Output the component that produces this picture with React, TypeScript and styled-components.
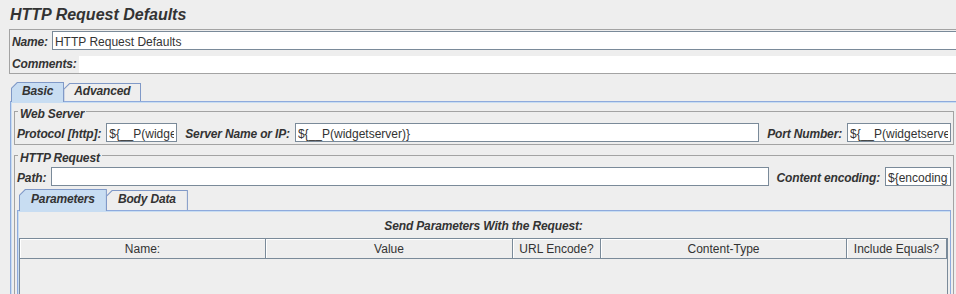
import React from "react";
import styled, { createGlobalStyle } from "styled-components";

const FONT = `"Liberation Sans", Arial, sans-serif`;
const TEXT = "#333333";
const FIELD_BORDER = "#7a8a99";
const GROUP_BORDER = "#a3a3a3";
const TAB_BORDER = "#8099c7";
const PANEL_BORDER = "#8eaadc";
const SELECTED = "#c8ddf2";
const BG = "#eeeeee";

const GlobalStyle = createGlobalStyle`
  html, body { margin: 0; padding: 0; background: ${BG}; overflow: hidden; }
  body { font-family: ${FONT}; font-size: 12px; color: ${TEXT}; }
  *, *::before, *::after { box-sizing: border-box; }
`;

const Page = styled.div`
  width: 956px;
  height: 294px;
  overflow: hidden;
  background: ${BG};
`;

const Title = styled.h1`
  margin: 0;
  height: 29px;
  padding-left: 10px;
  line-height: 29px;
  font-size: 16px;
  font-weight: bold;
  font-style: italic;
  color: ${TEXT};
  white-space: nowrap;
`;

const NamePanel = styled.div`
  margin: 0 -30px 0 9px;
  border: 1px solid ${GROUP_BORDER};
  padding: 1px 0 0 2px;
  display: flex;
  flex-direction: column;
  gap: 6px;
`;

const Row = styled.div<{ $gap?: number; $stretch?: boolean }>`
  display: flex;
  align-items: ${(p) => (p.$stretch ? "stretch" : "baseline")};
  gap: ${(p) => p.$gap ?? 5}px;
`;

const Label = styled.label<{ $after?: boolean; $lh?: number }>`
  flex: none;
  margin-left: ${(p) => (p.$after ? 3 : 0)}px;
  font-weight: bold;
  font-style: italic;
  white-space: nowrap;
  color: ${TEXT};
  letter-spacing: -0.15px;
  ${(p) => (p.$lh ? `line-height: ${p.$lh}px;` : "")}
`;

const Field = styled.input.attrs({ readOnly: true, type: "text" })<{ $w?: number }>`
  flex: ${(p) => (p.$w ? `0 0 ${p.$w}px` : "1 1 0")};
  min-width: 0;
  width: ${(p) => (p.$w ? `${p.$w}px` : "auto")};
  height: 19px;
  margin: 0;
  border: 1px solid ${FIELD_BORDER};
  border-radius: 0;
  padding: 2px 2px 0 2px;
  background: #ffffff;
  font: 12px ${FONT};
  color: ${TEXT};
  outline: none;
`;

const CommentArea = styled.div`
  flex: 1 1 0;
  height: 17px;
  background: #ffffff;
`;

const TabStrip = styled.div<{ $h: number; $inset: number; $top: number }>`
  display: flex;
  align-items: flex-end;
  height: ${(p) => p.$h - 1}px;
  margin-top: ${(p) => p.$top}px;
  padding-left: ${(p) => p.$inset}px;
`;

const Tab = styled.div<{ $active?: boolean; $h: number }>`
  position: relative;
  z-index: ${(p) => (p.$active ? 2 : 1)};
  height: ${(p) => (p.$active ? p.$h : p.$h - 2)}px;
  margin-bottom: ${(p) => (p.$active ? -1 : 0)}px;
  margin-left: -1px;
  padding: 1px 1px 0 1px;
  background: ${TAB_BORDER};
  clip-path: polygon(6px 0, 100% 0, 100% 100%, 0 100%, 0 6px);
  &:first-child { margin-left: 0; }
`;

const TabFace = styled.div<{ $active?: boolean; $pt: number; $px: number }>`
  height: 100%;
  padding: ${(p) => p.$pt}px ${(p) => p.$px}px 0 ${(p) => p.$px}px;
  background: ${(p) => (p.$active ? SELECTED : BG)};
  clip-path: polygon(5.6px 0, 100% 0, 100% 100%, 0 100%, 0 5.6px);
  line-height: 14px;
  font-weight: bold;
  font-style: italic;
  white-space: nowrap;
  color: ${TEXT};
  letter-spacing: -0.15px;
`;

const TabBody = styled.div<{ $pad: string }>`
  border: 1px solid ${PANEL_BORDER};
  box-shadow: inset 1px 1px 0 ${SELECTED};
  padding: ${(p) => p.$pad};
`;

const OuterTabs = styled.div`
  margin-left: 10px;
  width: 948px;
`;

const Group = styled.fieldset<{ $top: number }>`
  margin: ${(p) => p.$top}px 0 0 0;
  min-width: 0;
  border: 1px solid ${GROUP_BORDER};
  padding: 3px 2px 2px 2px;
`;

const GroupTitle = styled.legend`
  margin-left: 1px;
  padding: 5px 2px 0 2px;
  line-height: 12px;
  font-weight: bold;
  font-style: italic;
  color: ${TEXT};
  letter-spacing: -0.15px;
`;

const Caption = styled.div`
  height: 14px;
  margin-bottom: 5px;
  line-height: 14px;
  text-align: center;
  font-weight: bold;
  font-style: italic;
  color: ${TEXT};
  letter-spacing: -0.15px;
`;

const Table = styled.div`
  border: 1px solid ${FIELD_BORDER};
  border-bottom: none;
  height: 80px;
`;

const HeaderRow = styled.div`
  display: grid;
  grid-template-columns: 246px 247px 88px 246px 1fr;
  border-bottom: 1px solid ${FIELD_BORDER};
`;

const HeaderCell = styled.div`
  height: 19px;
  padding-top: 2px;
  line-height: 17px;
  border-right: 1px solid ${FIELD_BORDER};
  box-shadow: inset 1px 1px 0 #ffffff;
  text-align: center;
  white-space: nowrap;
  overflow: hidden;
  color: ${TEXT};
`;

type TabDef = { label: string; active?: boolean };

const Tabs: React.FC<{ tabs: TabDef[]; h: number; inset: number; top: number; px: number }> = ({
  tabs,
  h,
  inset,
  top,
  px,
}) => {
  const basePt = Math.floor((h - 18) / 2);
  return (
    <TabStrip $h={h} $inset={inset} $top={top}>
      {tabs.map((t) => (
        <Tab key={t.label} $active={t.active} $h={h}>
          <TabFace $active={t.active} $pt={t.active ? basePt : basePt - 1} $px={px}>
            {t.label}
          </TabFace>
        </Tab>
      ))}
    </TabStrip>
  );
};

const columns = ["Name:", "Value", "URL Encode?", "Content-Type", "Include Equals?"];

export default function App() {
  return (
    <>
      <GlobalStyle />
      <Page>
        <Title>HTTP Request Defaults</Title>
        <NamePanel>
          <Row $gap={4}>
            <Label>Name:</Label>
            <Field value="HTTP Request Defaults" />
          </Row>
          <Row $gap={2} $stretch>
            <Label $lh={17}>Comments:</Label>
            <CommentArea />
          </Row>
        </NamePanel>

        <OuterTabs>
          <Tabs
            h={20}
            inset={1}
            top={8}
            px={10}
            tabs={[{ label: "Basic", active: true }, { label: "Advanced" }]}
          />
          <TabBody $pad="0 3px 0 3px">
            <Group $top={1}>
              <GroupTitle>Web Server</GroupTitle>
              <Row>
                <Label>Protocol [http]:</Label>
                <Field $w={71} value="${__P(widgetprotocol)}" />
                <Label $after>Server Name or IP:</Label>
                <Field value="${__P(widgetserver)}" />
                <Label $after>Port Number:</Label>
                <Field $w={104} value="${__P(widgetserverport)}" />
              </Row>
            </Group>
            <Group $top={2}>
              <GroupTitle>HTTP Request</GroupTitle>
              <Row>
                <Label>Path:</Label>
                <Field value="" />
                <Label $after>Content encoding:</Label>
                <Field $w={66} value="${encoding}" />
              </Row>
              <Tabs
                h={22}
                inset={2}
                top={3}
                px={11}
                tabs={[{ label: "Parameters", active: true }, { label: "Body Data" }]}
              />
              <TabBody $pad="8px 2px 0 1px">
                <Caption>Send Parameters With the Request:</Caption>
                <Table>
                  <HeaderRow>
                    {columns.map((c) => (
                      <HeaderCell key={c}>{c}</HeaderCell>
                    ))}
                  </HeaderRow>
                </Table>
              </TabBody>
            </Group>
          </TabBody>
        </OuterTabs>
      </Page>
    </>
  );
}
